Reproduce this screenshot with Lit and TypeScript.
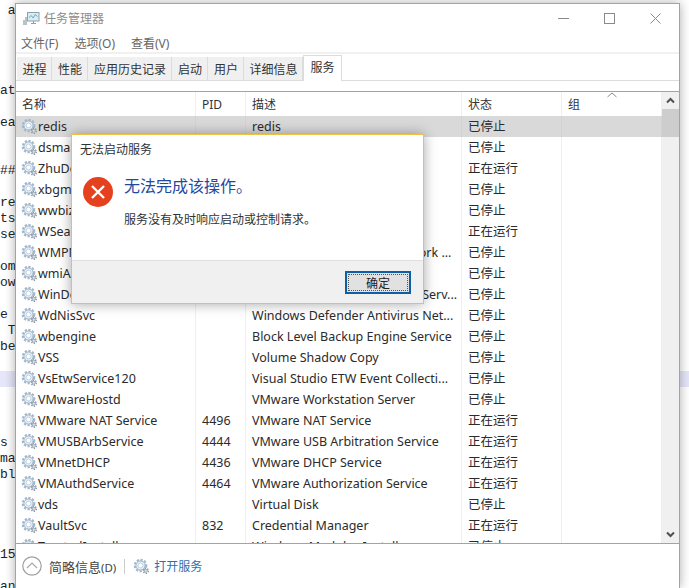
import { LitElement, html, css, svg } from "lit";
import { customElement } from "lit/decorators.js";

const STOP = "已停止";
const RUN = "正在运行";
const rows: [string, string, string, string][] = [
  ["redis", "", "redis", STOP],
  ["dsmaSvc", "", "dsmaSvc", STOP],
  ["ZhuDongFangYu", "", "主动防御", RUN],
  ["xbgmsvc", "", "Xbox Game Monitoring", STOP],
  ["wwbizsrv", "", "wwbizsrv", STOP],
  ["WSearch", "", "Windows Search", RUN],
  ["WMPNetworkSvc", "", "Windows Media Player Network ...", STOP],
  ["wmiApSrv", "", "WMI Performance Adapter", STOP],
  ["WinDefend", "", "Windows Defender Antivirus Serv...", STOP],
  ["WdNisSvc", "", "Windows Defender Antivirus Net...", STOP],
  ["wbengine", "", "Block Level Backup Engine Service", STOP],
  ["VSS", "", "Volume Shadow Copy", STOP],
  ["VsEtwService120", "", "Visual Studio ETW Event Collecti...", STOP],
  ["VMwareHostd", "", "VMware Workstation Server", STOP],
  ["VMware NAT Service", "4496", "VMware NAT Service", RUN],
  ["VMUSBArbService", "4444", "VMware USB Arbitration Service", RUN],
  ["VMnetDHCP", "4436", "VMware DHCP Service", RUN],
  ["VMAuthdService", "4464", "VMware Authorization Service", RUN],
  ["vds", "", "Virtual Disk", STOP],
  ["VaultSvc", "832", "Credential Manager", RUN],
  ["TrustedInstaller", "", "Windows Modules Installer", STOP],
];

const desktopLines: Record<number, string> = {
  0: " a", 5: "at", 7: "ea", 10: "##", 12: "re", 13: "ts", 14: "se", 16: "om", 17: "ow",
  19: "e", 20: " T", 21: "be", 27: "s", 28: "ma", 29: "bl", 34: "15", 36: "an",
};

const gear = () => svg`<svg class="gear" width="17" height="17" viewBox="0 0 17 17">
  <circle cx="7.5" cy="7.5" r="5.7" fill="none" stroke="#a3b7cc" stroke-width="2.2" stroke-dasharray="2.2 1.53"/>
  <circle cx="7.5" cy="7.5" r="4.6" fill="#e2edf7" stroke="#9db3c9" stroke-width="1"/>
  <circle cx="7.5" cy="7.5" r="2.4" fill="#fff" stroke="#b7c8d9" stroke-width=".8"/>
  <circle cx="12.8" cy="12.8" r="2.5" fill="none" stroke="#8f9aa8" stroke-width="1.6" stroke-dasharray="1.3 1.3"/>
  <circle cx="12.8" cy="12.8" r="1.6" fill="#d8dfe7" stroke="#8f9aa8" stroke-width=".7"/>
</svg>`;

@customElement("app-root")
export class AppRoot extends LitElement {
  static styles = css`
    :host {
      display: block;
      position: relative;
      width: 689px;
      height: 588px;
      overflow: hidden;
      background: #fff;
      font-family: "Noto Sans", "Noto Sans CJK SC", sans-serif;
      font-size: 12px;
      color: #2b2b2b;
    }
    .desktop {
      padding-top: 3px;
      font: 13px/16px "Liberation Mono", monospace;
      color: #222;
    }
    .dline { height: 16px; white-space: pre; }
    .dline.sel { background: #e6e6fa; }
    .window {
      position: absolute;
      left: 15px;
      top: 3px;
      width: 665px;
      height: 585px;
      box-sizing: border-box;
      border: 1px solid #a3a3a3;
      border-bottom: none;
      background: #fff;
      box-shadow: 0 0 10px rgba(0, 0, 0, 0.32);
      display: flex;
      flex-direction: column;
    }
    .title {
      height: 28px;
      flex: none;
      display: flex;
      align-items: center;
      padding-left: 7px;
      gap: 4px;
      color: #8c8c8c;
    }
    .title .name { flex: 1; }
    .ctrl { display: flex; align-items: center; padding-right: 18px; gap: 35px; }
    .ctrl svg { display: block; }
    .menu {
      height: 20px;
      flex: none;
      display: flex;
      align-items: flex-end;
      padding-left: 5px;
      gap: 16px;
      color: #666;
      line-height: 17px;
    }
    .sep { height: 2px; flex: none; background: #f1f1f1; }
    .tabs {
      height: 27px;
      flex: none;
      box-sizing: border-box;
      display: flex;
      align-items: flex-end;
      padding-left: 1px;
      border-bottom: 1px solid #dcdcdc;
    }
    .tab {
      height: 23px;
      box-sizing: border-box;
      padding: 4px 0 0 1px;
      text-align: center;
      background: #f0f0f0;
      border-right: 1px solid #dcdcdc;
      line-height: 18px;
      color: #333;
    }
    .tab.active {
      height: 26px;
      margin-bottom: -1px;
      background: #fff;
      border: 1px solid #dcdcdc;
      border-bottom: none;
      padding: 3px 0 0;
    }
    .gap { height: 10px; flex: none; }
    .table {
      flex: none;
      display: flex;
      border-top: 1px solid #a3a3a3;
      border-bottom: 1px solid #a3a3a3;
      box-sizing: border-box;
      height: 453px;
      position: relative;
    }
    .list { flex: 1; overflow: hidden; min-width: 0; }
    .row {
      display: grid;
      grid-template-columns: 180px 50px 216px 100px 100px;
      height: 21px;
      align-items: stretch;
      line-height: 22px;
    }
    .row.head { height: 24px; line-height: 25px; color: #333; }
    .row.sel { background: #d9d9d9; }
    .cell {
      border-right: 1px solid #efefef;
      padding-left: 6px;
      white-space: nowrap;
      overflow: hidden;
      font-size: 12.5px;
      min-width: 0;
    }
    .row.sel .cell { border-right-color: #d2d2d2; }
    .row.head .cell { font-size: 12px; }
    .cell.svc { display: flex; align-items: center; padding-left: 5px; }
    .gear { flex: none; display: block; }
    .caret { position: absolute; left: 590px; top: 0; display: block; }
    .bar {
      width: 17px;
      flex: none;
      background: #f0f0f0;
      display: flex;
      flex-direction: column;
    }
    .arrow { height: 17px; display: flex; align-items: center; justify-content: center; flex: none; }
    .thumb { height: 28px; background: #cdcdcd; flex: none; }
    .spacer { flex: 1; }
    .footer {
      flex: 1;
      display: flex;
      align-items: center;
      padding: 0 0 0 6px;
    }
    .footer svg { display: block; flex: none; }
    .less { margin-left: 7px; font-size: 13px; color: #444; }
    .less small { font-size: 11.5px; }
    .divider { width: 1px; height: 15px; background: #ccc; margin: 0 8px 0 8px; flex: none; }
    .open { margin-left: 4px; color: #2a6fb0; font-size: 12px; }
    .dialog {
      position: absolute;
      left: 55px;
      top: 130px;
      width: 353px;
      height: 170px;
      box-sizing: border-box;
      border: 1px solid #f0c040;
      background: #fff;
      box-shadow: 0 0 12px rgba(0, 0, 0, 0.35);
      display: flex;
      flex-direction: column;
    }
    .dtitle { height: 26px; flex: none; padding: 5px 0 0 8px; line-height: 20px; box-sizing: border-box; color: #333; }
    .dbody { flex: 1; display: flex; padding: 15px 0 0 11px; gap: 11px; }
    .dbody svg { display: block; flex: none; margin-top: 1px; }
    .dhead { font-size: 16px; color: #1f4aa0; line-height: 22px; margin-top: -1px; }
    .dtext { margin-top: 14px; line-height: 18px; color: #333; }
    .dfoot {
      height: 43px;
      flex: none;
      box-sizing: border-box;
      background: #f0f0f0;
      border-top: 1px solid #dfdfdf;
      display: flex;
      justify-content: flex-end;
      align-items: flex-start;
      padding: 10px 12px 0 0;
    }
    .btn {
      width: 66px;
      height: 23px;
      box-sizing: border-box;
      border: 2px solid #0f5fa6;
      background: #e1e1e1;
      outline: 1px dotted #555;
      outline-offset: -4px;
      text-align: center;
      line-height: 19px;
      color: #222;
      font: inherit;
      padding: 0;
    }
  `;

  render() {
    const lines = [];
    for (let i = 0; i < 37; i++) {
      lines.push(html`<div class="dline ${i === 23 ? "sel" : ""}">${desktopLines[i] ?? ""}</div>`);
    }
    return html`
      <div class="desktop">${lines}</div>
      <div class="window">
        <div class="title">
          <svg width="17" height="16" viewBox="0 0 17 16">
            <rect x="4.5" y="2.5" width="11.5" height="8.5" fill="#dcecf2" stroke="#8aa2ad"/>
            <path d="M6 7.5l2.2-2 2 2.5 2-3.5 2.3 2" fill="none" stroke="#5fb0c2" stroke-width="1"/>
            <path d="M8 13.5h5M10.5 11v2.5" stroke="#8f9fa8" fill="none"/>
            <path d="M1 15V10M3 15V7" stroke="#9aa8af" stroke-width="1.4" fill="none"/>
          </svg>
          <span class="name">任务管理器</span>
          <div class="ctrl">
            <svg width="11" height="11" viewBox="0 0 11 11"><path d="M0 5.5h11" stroke="#8a8a8a"/></svg>
            <svg width="11" height="11" viewBox="0 0 11 11"><rect x=".5" y=".5" width="10" height="10" fill="none" stroke="#8a8a8a"/></svg>
            <svg width="11" height="11" viewBox="0 0 11 11"><path d="M.5.5l10 10M10.5.5l-10 10" stroke="#8a8a8a"/></svg>
          </div>
        </div>
        <div class="menu"><span>文件(F)</span><span>选项(O)</span><span>查看(V)</span></div>
        <div class="sep"></div>
        <div class="tabs">
          ${[["进程", 35], ["性能", 36], ["应用历史记录", 84], ["启动", 36], ["用户", 36], ["详细信息", 59]].map(
            ([t, w]) => html`<div class="tab" style="width:${w}px">${t}</div>`
          )}
          <div class="tab active" style="width:39px">服务</div>
        </div>
        <div class="gap"></div>
        <div class="table">
          <div class="list">
            <div class="row head">
              <div class="cell">名称</div>
              <div class="cell">PID</div>
              <div class="cell">描述</div>
              <div class="cell">状态</div>
              <div class="cell">组</div>
            </div>
            ${rows.map(
              (r, i) => html`<div class="row ${i === 0 ? "sel" : ""}">
                <div class="cell svc">${gear()}<span>${r[0]}</span></div>
                <div class="cell">${r[1]}</div>
                <div class="cell">${r[2]}</div>
                <div class="cell">${r[3]}</div>
                <div class="cell"></div>
              </div>`
            )}
          </div>
          <svg class="caret" width="12" height="6" viewBox="0 0 12 6"><path d="M1.5 5L6 1l4.5 4" fill="none" stroke="#8c8c8c"/></svg>
          <div class="bar">
            <div class="arrow">
              <svg width="9" height="7" viewBox="0 0 9 7"><path d="M1 5.5L4.5 2 8 5.5" fill="none" stroke="#505050" stroke-width="2"/></svg>
            </div>
            <div class="thumb"></div>
            <div class="spacer"></div>
            <div class="arrow">
              <svg width="9" height="7" viewBox="0 0 9 7"><path d="M1 1.5L4.5 5 8 1.5" fill="none" stroke="#505050" stroke-width="2"/></svg>
            </div>
          </div>
        </div>
        <div class="footer">
          <svg width="20" height="20" viewBox="0 0 20 20">
            <circle cx="10" cy="10" r="9.2" fill="#fff" stroke="#a0a0a0" stroke-width="1.2"/>
            <path d="M5 12l5-5 5 5" fill="none" stroke="#a8a8a8" stroke-width="1.2"/>
          </svg>
          <span class="less">简略信息<small>(D)</small></span>
          <span class="divider"></span>
          ${gear()}
          <span class="open">打开服务</span>
        </div>
        <div class="dialog">
          <div class="dtitle">无法启动服务</div>
          <div class="dbody">
            <svg width="30" height="30" viewBox="0 0 30 30">
              <circle cx="15" cy="15" r="15" fill="#e5411f"/>
              <path d="M9 9l12 12M21 9L9 21" stroke="#fff" stroke-width="2.4"/>
            </svg>
            <div>
              <div class="dhead">无法完成该操作。</div>
              <div class="dtext">服务没有及时响应启动或控制请求。</div>
            </div>
          </div>
          <div class="dfoot"><button class="btn">确定</button></div>
        </div>
      </div>
    `;
  }
}
